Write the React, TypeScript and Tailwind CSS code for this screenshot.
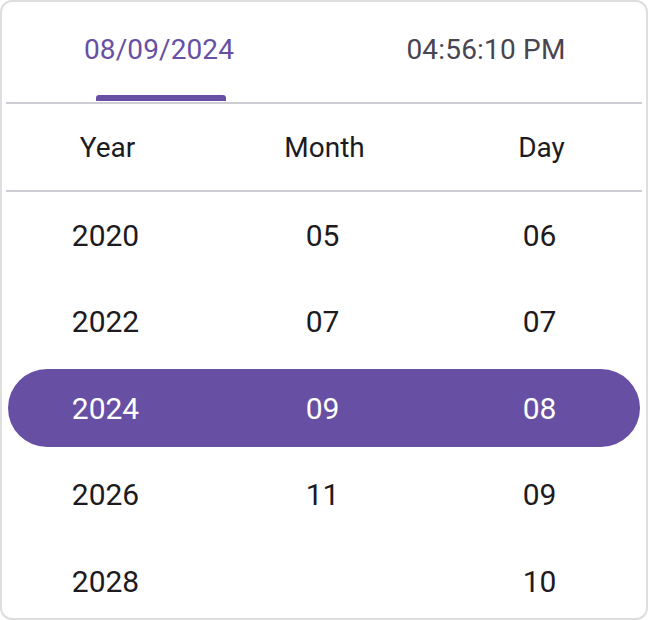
import React from "react";

const rows = [
  { year: "2020", month: "05", day: "06" },
  { year: "2022", month: "07", day: "07" },
  { year: "2024", month: "09", day: "08", selected: true },
  { year: "2026", month: "11", day: "09" },
  { year: "2028", month: "", day: "10" },
];

export default function App() {
  return (
    <div className="w-[648px] h-[620px] bg-white">
      <div
        className="w-[648px] h-[620px] border-2 border-[#dedede] rounded-[12px] overflow-hidden bg-white"
        style={{ fontFamily: "Roboto, 'Noto Sans', sans-serif" }}
      >
        {/* tabs */}
        <div className="flex h-[100px]">
          <div className="w-[318px] flex flex-col items-center">
            <div className="h-[93px] flex items-center pt-[2px] pr-[4px] text-[28px] text-[#6750a4] tracking-[0.1px]">
              08/09/2024
            </div>
            <div className="w-[130px] h-[6px] rounded-t-[3px] bg-[#6750a4]" />
          </div>
          <div className="flex-1 flex flex-col items-center pl-[6px]">
            <div className="h-[93px] flex items-center pt-[2px] text-[28px] text-[#49454f] tracking-[0.2px]">
              04:56:10 PM
            </div>
          </div>
        </div>
        <div className="mx-1 h-[2px] bg-[#cfcdd4]" />

        {/* column headers */}
        <div className="flex h-[86px] items-center pt-[2px] text-[28px] text-[#1c1b1f] -ml-[3px]">
          <div className="w-[217px] shrink-0 text-center">Year</div>
          <div className="w-[217px] shrink-0 text-center">Month</div>
          <div className="w-[217px] shrink-0 text-center">Day</div>
        </div>
        <div className="mx-1 h-[2px] bg-[#cfcdd4]" />

        {/* wheel rows */}
        <div className="flex flex-col">
          {rows.map((r) => (
            <div key={r.year} className="h-[86.5px] shrink-0 flex items-center">
              <div
                className={
                  r.selected
                    ? "mx-[6px] flex-1 min-w-0 h-[78px] rounded-full bg-[#6750a4] text-white flex items-center"
                    : "mx-[6px] flex-1 min-w-0 h-[78px] text-[#1d1b20] flex items-center"
                }
              >
                <div className="flex shrink-0 -ml-[11px] text-[30px]">
                  <div className="w-[217px] shrink-0 text-center">{r.year}</div>
                  <div className="w-[217px] shrink-0 text-center">{r.month}</div>
                  <div className="w-[217px] shrink-0 text-center">{r.day}</div>
                </div>
              </div>
            </div>
          ))}
        </div>
      </div>
    </div>
  );
}
